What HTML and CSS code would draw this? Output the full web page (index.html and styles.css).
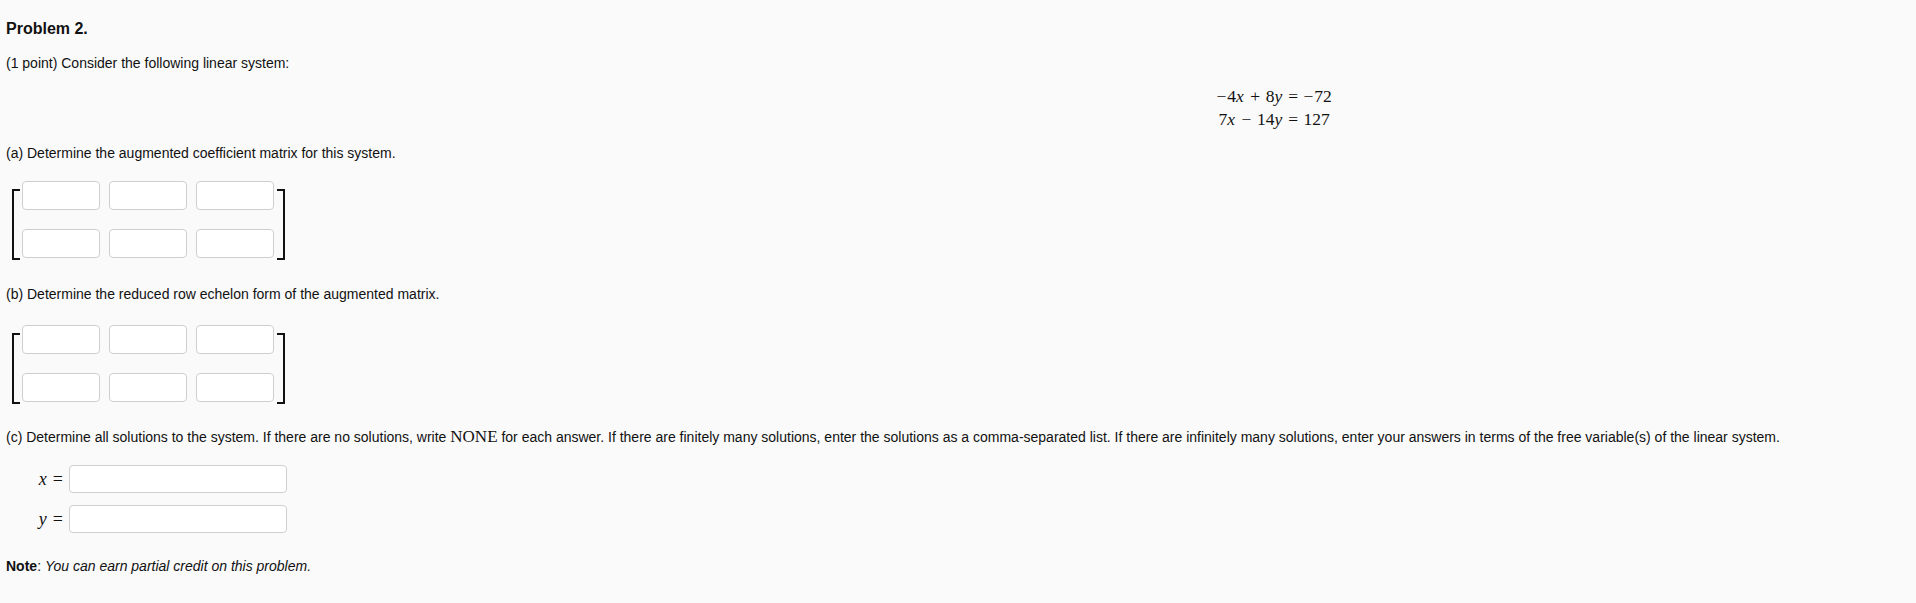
FILE: index.html
```html
<!DOCTYPE html>
<html lang="en">
<head>
<meta charset="utf-8">
<title>Problem 2</title>
<link rel="stylesheet" href="styles.css">
</head>
<body>
<div class="problem">
  <h3 class="title">Problem 2.</h3>
  <p class="text intro">(1 point) Consider the following linear system:</p>

  <div class="system">
    <span class="lhs"><span class="neg">−</span>4<i class="mi">x</i><span class="bin">+</span>8<i class="mi">y</i></span>
    <span class="rhs"><span class="rel">=</span><span class="neg">−</span>72</span>
    <span class="lhs">7<i class="mi">x</i><span class="bin">−</span>14<i class="mi">y</i></span>
    <span class="rhs"><span class="rel">=</span>127</span>
  </div>

  <p class="text part-a">(a) Determine the augmented coefficient matrix for this system.</p>
  <div class="matrix matrix-a">
    <span class="bracket bracket-left"></span>
    <div class="cells">
      <input class="cell" type="text"><input class="cell" type="text"><input class="cell" type="text">
      <input class="cell" type="text"><input class="cell" type="text"><input class="cell" type="text">
    </div>
    <span class="bracket bracket-right"></span>
  </div>

  <p class="text part-b">(b) Determine the reduced row echelon form of the augmented matrix.</p>
  <div class="matrix matrix-b">
    <span class="bracket bracket-left"></span>
    <div class="cells">
      <input class="cell" type="text"><input class="cell" type="text"><input class="cell" type="text">
      <input class="cell" type="text"><input class="cell" type="text"><input class="cell" type="text">
    </div>
    <span class="bracket bracket-right"></span>
  </div>

  <p class="text part-c">(c) Determine all solutions to the system. If there are no solutions, write <span class="mtext">NONE</span> for each answer. If there are finitely many solutions, enter the solutions as a comma-separated list. If there are infinitely many solutions, enter your answers in terms of the free variable(s) of the linear system.</p>

  <div class="answers">
    <div class="answer-row">
      <span class="var"><i class="mi">x</i><span class="rel">=</span></span>
      <input class="answer" type="text">
    </div>
    <div class="answer-row">
      <span class="var"><i class="mi">y</i><span class="rel">=</span></span>
      <input class="answer" type="text">
    </div>
  </div>

  <p class="note"><b>Note</b>: <i>You can earn partial credit on this problem.</i></p>
</div>
</body>
</html>
```

FILE: styles.css
```css
html, body {
  margin: 0;
  padding: 0;
  background: #fafafa;
}

body {
  font-family: "Liberation Sans", Arial, sans-serif;
  font-size: 14px;
  color: #111;
}

.problem {
  padding: 20px 6px 0 6px;
}

.title {
  margin: 0;
  font-size: 16px;
  line-height: 18px;
  font-weight: bold;
}

.text {
  margin: 0;
  font-size: 14px;
  line-height: 16px;
}

.intro { margin-top: 17px; }

/* math */
.mi {
  font-family: "Liberation Serif", "DejaVu Serif", serif;
  font-style: italic;
  padding-right: 0.04em;
}

.neg { padding-right: 0.05em; }
.bin { padding: 0 0.33em; }
.rel { padding: 0 0.3em; }

.system {
  margin-top: 14px;
  margin-left: 1200px;
  display: grid;
  grid-template-columns: 77px auto;
  font-family: "Liberation Serif", "DejaVu Serif", serif;
  font-size: 17.5px;
  line-height: 23px;
  white-space: nowrap;
}

.lhs { text-align: right; }
.rhs { text-align: left; }

.mtext {
  font-family: "Liberation Serif", "DejaVu Serif", serif;
  font-size: 17px;
}

.part-a { margin-top: 14px; }
.part-b { margin-top: 26px; }
.part-c { margin-top: 25px; }

/* matrix */
.matrix {
  display: flex;
  align-items: flex-start;
  margin-left: 6px;
}

.matrix-a { margin-top: 20px; }
.matrix-b { margin-top: 23px; }

.cells {
  display: grid;
  grid-template-columns: repeat(3, 78px);
  column-gap: 9px;
  row-gap: 19px;
  margin: 0 2px 0 2px;
}

.cell, .answer {
  box-sizing: border-box;
  height: 29px;
  margin: 0;
  padding: 0 4px;
  border: 1px solid #cfcfcf;
  border-radius: 4px;
  background: #fff;
  font: inherit;
}

.cell { width: 78px; }

.bracket {
  box-sizing: border-box;
  width: 8px;
  height: 71px;
  margin-top: 8px;
  border: 2px solid #111;
}

.bracket-left { border-right: none; }
.bracket-right { border-left: none; margin-left: 1px; }

/* answers */
.answers {
  margin-top: 20px;
  display: flex;
  flex-direction: column;
  row-gap: 12px;
}

.answer-row {
  display: flex;
  align-items: center;
}

.var {
  width: 57px;
  margin-right: 6px;
  text-align: right;
  font-family: "Liberation Serif", "DejaVu Serif", serif;
  font-size: 18px;
  white-space: nowrap;
}

.var .rel { padding: 0 0 0 0.3em; }

.answer {
  width: 218px;
  height: 28px;
}

.note {
  margin: 25px 0 0 0;
  font-size: 14px;
  line-height: 16px;
}
```
